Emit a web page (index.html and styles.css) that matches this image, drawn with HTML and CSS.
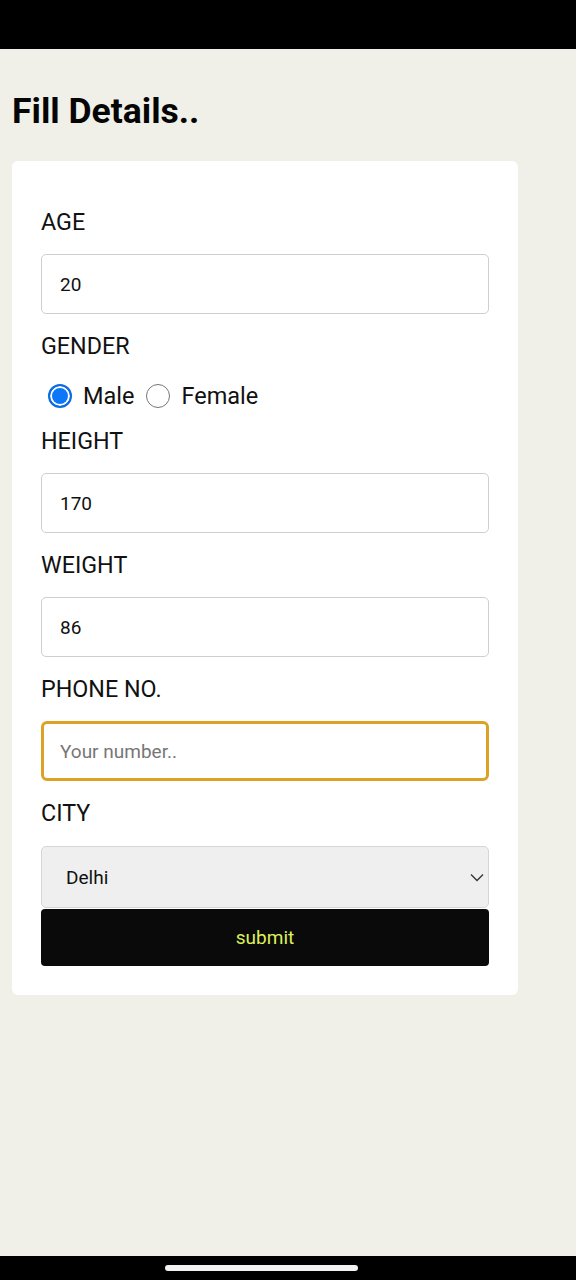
FILE: index.html
```html
<!DOCTYPE html>
<html>
<head>
<meta charset="utf-8">
<link rel="stylesheet" href="styles.css">
</head>
<body>
<div class="statusbar"></div>
<main class="page">
  <h1 class="title">Fill Details..</h1>
  <form class="card">
    <label class="label">AGE</label>
    <input class="field" type="text" value="20">
    <label class="label">GENDER</label>
    <div class="radios">
      <label class="radio"><input type="radio" name="g" checked><span class="dot"></span>Male</label>
      <label class="radio"><input type="radio" name="g"><span class="dot"></span>Female</label>
    </div>
    <label class="label">HEIGHT</label>
    <input class="field" type="text" value="170">
    <label class="label">WEIGHT</label>
    <input class="field" type="text" value="86">
    <label class="label">PHONE NO.</label>
    <input class="field focus" type="text" placeholder="Your number..">
    <label class="label">CITY</label>
    <div class="select-wrap">
      <select class="select"><option>Delhi</option></select>
      <svg class="chev" width="14" height="9" viewBox="0 0 14 9"><path d="M1 1.5 L7 7.5 L13 1.5" fill="none" stroke="#333" stroke-width="1.3"/></svg>
    </div>
    <button class="submit" type="button">submit</button>
  </form>
</main>
<div class="navbar"><span class="pill"></span></div>
</body>
</html>
```
FILE: styles.css
```css
* { box-sizing: border-box; }
html, body { margin: 0; padding: 0; }
body {
  width: 576px;
  height: 1280px;
  background: #f1f0e8;
  font-family: Roboto, "Liberation Sans", sans-serif;
  color: #111;
  display: flex;
  flex-direction: column;
}
.statusbar { height: 49px; background: #000; flex: none; }
.page { flex: 1; padding: 0 12px; }
.title {
  margin: 40px 0 0;
  font-size: 35.5px;
  font-weight: 700;
  line-height: 44px;
  color: #050505;
}
.card {
  width: 506px;
  margin-top: 28px;
  background: #fff;
  border-radius: 6px;
  padding: 48px 29px 29px;
  display: flex;
  flex-direction: column;
}
.label {
  font-size: 23.3px;
  line-height: 26px;
  color: #111;
  display: block;
}
.field {
  margin-top: 19px;
  margin-bottom: 19px;
  height: 60px;
  width: 448px;
  border: 1px solid #cfcfcf;
  border-radius: 5px;
  padding: 0 18px;
  font-family: Roboto, "Liberation Sans", sans-serif;
  font-size: 19px;
  color: #111;
  background: #fff;
  outline: none;
}
.field.focus {
  border: 3px solid #dca226;
  border-radius: 6px;
  padding: 0 16px;
}
.field::placeholder { color: #777; }
.radios {
  display: flex;
  align-items: center;
  gap: 12px;
  margin-top: 22px;
  margin-bottom: 17px;
  padding-left: 7px;
  height: 30px;
}
.radio {
  display: flex;
  align-items: center;
  font-size: 23.5px;
  color: #111;
}
.radio input { display: none; }
.dot {
  width: 24px;
  height: 24px;
  border-radius: 50%;
  border: 1.5px solid #767676;
  margin-right: 11px;
  display: inline-block;
  background: #fff;
}
.radio input:checked + .dot {
  border: 2px solid #0b6ce0;
  background: #0d77f7;
  box-shadow: inset 0 0 0 2px #fff;
}
.select-wrap {
  position: relative;
  margin-top: 20px;
  width: 448px;
}
.select {
  appearance: none;
  -webkit-appearance: none;
  width: 448px;
  height: 62px;
  border: 1px solid #d6d6d6;
  border-radius: 5px;
  background: #efefef;
  font-family: Roboto, "Liberation Sans", sans-serif;
  font-size: 19px;
  color: #111;
  padding: 0 24px;
  display: block;
}
.chev {
  position: absolute;
  right: 5px;
  top: 27px;
}
.submit {
  margin-top: 1px;
  width: 448px;
  height: 57px;
  border: none;
  border-radius: 4px;
  background: #0a0a0a;
  color: #dff05a;
  font-family: Roboto, "Liberation Sans", sans-serif;
  font-size: 19px;
}
.navbar {
  height: 24px;
  background: #000;
  flex: none;
  display: flex;
  padding-top: 9px;
  padding-left: 165px;
}
.pill {
  width: 193px;
  height: 6px;
  border-radius: 3px;
  background: #f2f2f2;
}
```
